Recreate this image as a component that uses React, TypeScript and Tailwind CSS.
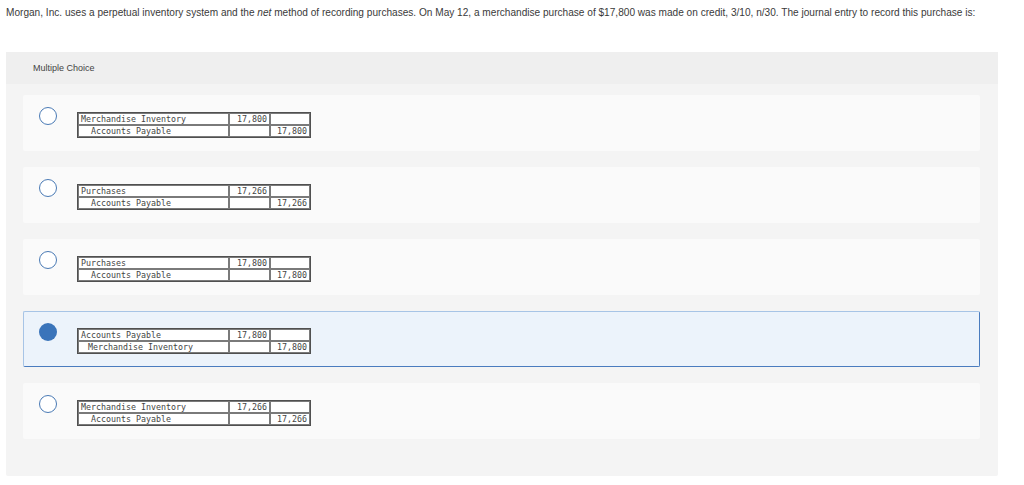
import React from "react";

type Entry = {
  debit: string;
  credit: string;
  amount: string;
  creditPad: string;
};

const OPTIONS: Entry[] = [
  { debit: "Merchandise Inventory", credit: "Accounts Payable", amount: "17,800", creditPad: "pl-[12px]" },
  { debit: "Purchases", credit: "Accounts Payable", amount: "17,266", creditPad: "pl-[12px]" },
  { debit: "Purchases", credit: "Accounts Payable", amount: "17,800", creditPad: "pl-[12px]" },
  { debit: "Accounts Payable", credit: "Merchandise Inventory", amount: "17,800", creditPad: "pl-[9px]" },
  { debit: "Merchandise Inventory", credit: "Accounts Payable", amount: "17,266", creditPad: "pl-[12px]" },
];

const SELECTED = 3;

function JournalTable({ e }: { e: Entry }) {
  const cell = "border border-[#7a7a7a] h-[12px] leading-[10px] p-0 align-middle";
  return (
    <table
      className="table-fixed w-[234px] border border-[#505050] bg-white text-[8.3px] text-[#444] [border-collapse:separate] [border-spacing:0]"
      style={{ fontFamily: '"DejaVu Sans Mono", "Liberation Mono", monospace' }}
    >
      <colgroup>
        <col className="w-[151px]" />
        <col className="w-[41px]" />
        <col className="w-[40px]" />
      </colgroup>
      <tbody>
        <tr>
          <td className={`${cell} pl-[2px] text-left whitespace-nowrap`}>{e.debit}</td>
          <td className={`${cell} pr-[2px] text-right`}>{e.amount}</td>
          <td className={cell}></td>
        </tr>
        <tr>
          <td className={`${cell} ${e.creditPad} text-left whitespace-nowrap`}>{e.credit}</td>
          <td className={cell}></td>
          <td className={`${cell} pr-[2px] text-right`}>{e.amount}</td>
        </tr>
      </tbody>
    </table>
  );
}

export default function App() {
  return (
    <div
      className="w-[1024px] h-[485px] bg-white"
      style={{ fontFamily: '"Liberation Sans", Arial, sans-serif' }}
    >
      <p className="pl-[6px] pt-[7px] text-[10.1px] leading-[12px] text-[#3a3a3a] whitespace-nowrap">
        Morgan, Inc. uses a perpetual inventory system and the <i>net</i> method of recording purchases. On May 12, a
        merchandise purchase of $17,800 was made on credit, 3/10, n/30. The journal entry to record this purchase is:
      </p>

      <div className="mt-[33px] ml-[6px] w-[992px] h-[424px] bg-[#f4f4f4] rounded-[2px]">
        <div className="h-[32px] bg-[#efefef] flex items-center pl-[27px] pt-[2px] text-[9px] text-[#444]">
          Multiple Choice
        </div>
        <div className="flex flex-col gap-[16px] pt-[11px] pl-[17px] pr-[18px]">
          {OPTIONS.map((o, i) => {
            const sel = i === SELECTED;
            return (
              <div
                key={i}
                className={
                  sel
                    ? "h-[56px] flex items-start rounded-[2px] bg-[#ecf3fb] border border-[#a7c4e6] border-r-[#4a7cbf] border-b-[#4a7cbf]"
                    : "h-[56px] flex items-start rounded-[2px] bg-[#fafafa] border border-transparent"
                }
              >
                <div className="pl-[15px] pt-[11px]">
                  {sel ? (
                    <div className="w-[18px] h-[18px] rounded-full bg-[#3a74ba]" />
                  ) : (
                    <div className="w-[18px] h-[18px] rounded-full border border-[#4a7ab5] bg-white" />
                  )}
                </div>
                <div className="pl-[20px] pt-[16px]">
                  <JournalTable e={o} />
                </div>
              </div>
            );
          })}
        </div>
      </div>
    </div>
  );
}
